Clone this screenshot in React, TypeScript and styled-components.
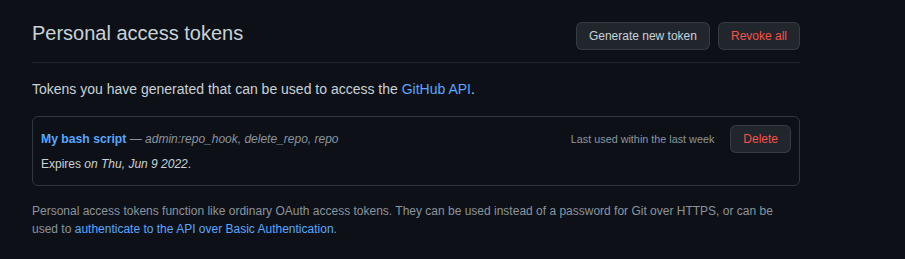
import React from "react";
import styled, { createGlobalStyle } from "styled-components";

const Global = createGlobalStyle`
  html, body { margin: 0; padding: 0; background: #0d1117; }
  body {
    font-family: "Liberation Sans", Arial, Helvetica, sans-serif;
    color: #c9d1d9;
    font-size: 14px;
    line-height: 1.5;
  }
  * { box-sizing: border-box; }
`;

const Page = styled.main`
  width: 768px;
  margin-left: 32px;
`;

const Subhead = styled.header`
  display: flex;
  align-items: flex-start;
  justify-content: space-between;
  padding-top: 21px;
  padding-bottom: 12px;
  border-bottom: 1px solid #21262d;
`;

const Heading = styled.h2`
  margin: 0;
  font-size: 20px;
  font-weight: 400;
  line-height: 25px;
  color: #c9d1d9;
`;

const Actions = styled.div`
  display: flex;
  gap: 8px;
  margin-top: 1px;
`;

const Button = styled.button<{ $danger?: boolean }>`
  font-family: inherit;
  font-size: 12px;
  line-height: 20px;
  height: 28px;
  padding: 3px 12px;
  border-radius: 6px;
  border: 1px solid rgba(240, 246, 252, 0.1);
  background: #21262d;
  color: ${(p) => (p.$danger ? "#f85149" : "#c9d1d9")};
  cursor: pointer;
  white-space: nowrap;
`;

const Intro = styled.p`
  margin: 16px 0 16px;
  font-size: 14px;
  line-height: 21px;
`;

const Link = styled.a`
  color: #58a6ff;
  text-decoration: none;
`;

const TokenBox = styled.div`
  border: 1px solid #30363d;
  border-radius: 6px;
  padding: 8px 8px 12px;
`;

const TokenRow = styled.div`
  display: flex;
  align-items: center;
  height: 28px;
`;

const TokenTitle = styled.div`
  flex: 1;
  font-size: 12px;
  line-height: 20px;
  color: #8b949e;
`;

const TokenName = styled.a`
  font-size: 12.2px;
  font-weight: 700;
  color: #58a6ff;
  text-decoration: none;
`;

const Scopes = styled.em`
  font-style: italic;
`;

const LastUsed = styled.span`
  font-size: 10.8px;
  color: #8b949e;
  margin-right: 16px;
`;

const Expires = styled.div`
  margin-top: 2px;
  font-size: 12px;
  line-height: 18px;
  color: #c9d1d9;
`;

const Note = styled.p`
  margin: 16px 0 0;
  font-size: 12px;
  line-height: 18px;
  color: #8b949e;
`;

export default function App() {
  return (
    <>
      <Global />
      <Page>
        <Subhead>
          <Heading>Personal access tokens</Heading>
          <Actions>
            <Button>Generate new token</Button>
            <Button $danger>Revoke all</Button>
          </Actions>
        </Subhead>
        <Intro>
          Tokens you have generated that can be used to access the{" "}
          <Link href="#">GitHub API</Link>.
        </Intro>
        <TokenBox>
          <TokenRow>
            <TokenTitle>
              <TokenName href="#">My bash script</TokenName> —{" "}
              <Scopes>admin:repo_hook, delete_repo, repo</Scopes>
            </TokenTitle>
            <LastUsed>Last used within the last week</LastUsed>
            <Button $danger>Delete</Button>
          </TokenRow>
          <Expires>
            Expires <em>on Thu, Jun 9 2022</em>.
          </Expires>
        </TokenBox>
        <Note>
          Personal access tokens function like ordinary OAuth access tokens. They
          can be used instead of a password for Git over HTTPS, or can be used to{" "}
          <Link href="#">authenticate to the API over Basic Authentication</Link>.
        </Note>
      </Page>
    </>
  );
}
